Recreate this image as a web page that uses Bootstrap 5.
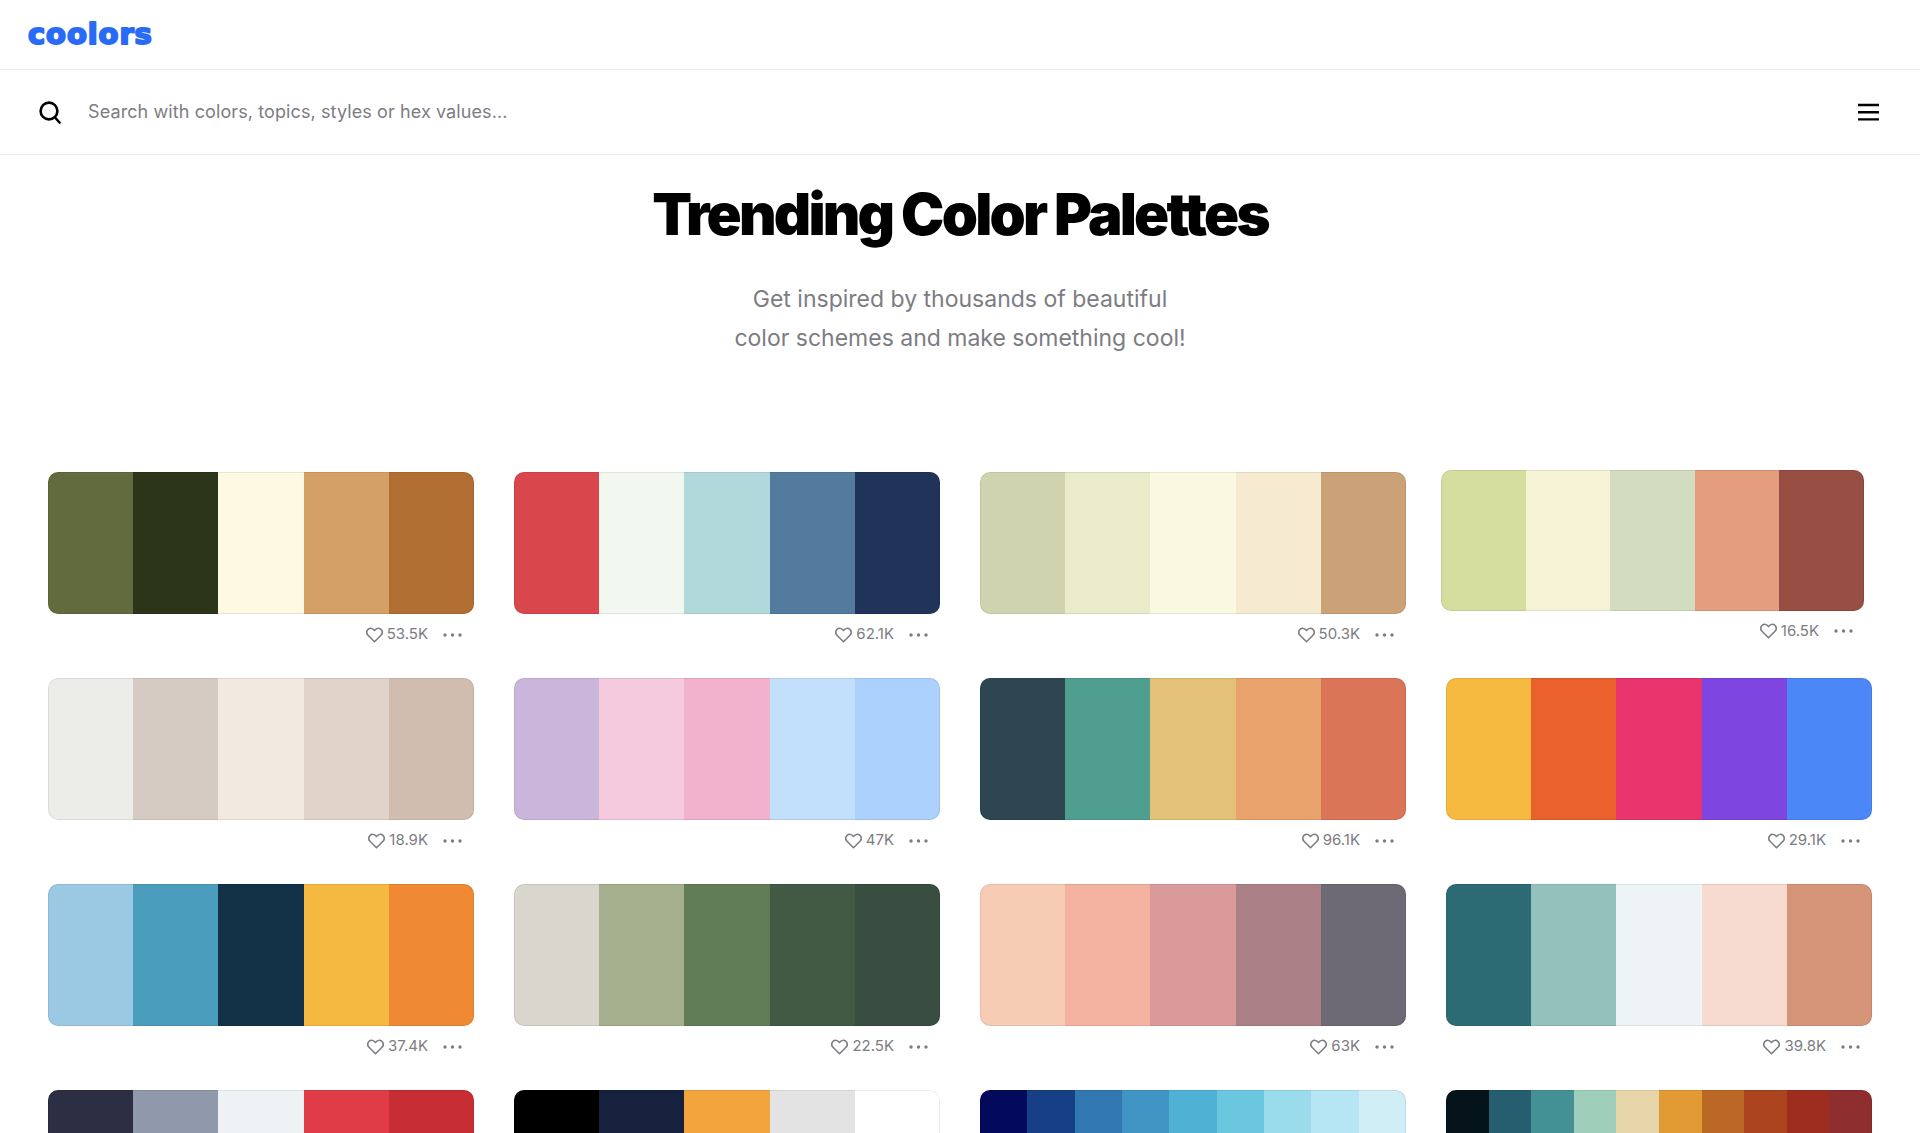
<!DOCTYPE html>
<html lang="en">
<head>
  <meta charset="UTF-8" />
  <meta name="viewport" content="width=device-width, initial-scale=1.0"/>
  <title>Trending Color Palettes</title>
  <link href="https://cdn.jsdelivr.net/npm/bootstrap@5.3.3/dist/css/bootstrap.min.css" rel="stylesheet" />
  <style>
    html, body { height: 100vh; overflow: hidden; }
    body { font-family: Inter, "Liberation Sans", sans-serif; color: #000; background: #fff; }
    .topbar { height: 70px; padding-left: 27px; border-bottom: 1px solid #e9e9ea; }
    .logo-word { font-family: "DejaVu Sans", sans-serif; font-weight: 700; font-size: 29px; letter-spacing: .9px; fill: #2a6bf5; stroke: #2a6bf5; stroke-width: 2px; stroke-linejoin: round; }
    .searchbar { height: 85px; padding: 0 41px 0 39px; border-bottom: 1px solid #e9e9ea; }
    .search-input { border: 0; outline: 0; padding: 0 0 2px; margin-left: 27px; font-size: 18px; letter-spacing: .1px; color: #7d7c83; background: transparent; }
    .search-input::placeholder { color: #7d7c83; opacity: 1; }
    .page-head { padding-top: 24px; height: 317px; }
    .page-title { font-weight: 900; font-size: 58px; line-height: 70px; letter-spacing: -2.8px; margin: 0 0 31px; }
    .page-sub { font-size: 23px; line-height: 39px; color: #7d7c83; margin: 0; }
    .palettes { padding: 0 48px; }
    .palettes .row { --bs-gutter-x: 40px; --bs-gutter-y: 0; }
    .palette-box { height: 206px; }
    .swatches { height: 142px; border-radius: 10px; overflow: hidden; position: relative; }
    .swatches::after { content: ""; position: absolute; inset: 0; border-radius: 10px; box-shadow: inset 0 0 0 1px rgba(0,0,0,.08); }
    .swatch { flex: 1 1 0; }
    .palette-meta { height: 41px; padding-right: 12px; font-size: 15px; color: #7d7c83; }
    .dots { margin-left: 15px; }
    /* this card is caught mid animation in the picture */
    .palette-moving { margin: -2px 8px 0 -5px; }
    .palette-moving .swatches { height: 141px; }
    .palette-moving .palette-meta { padding-right: 11px; height: 40px; }
  </style>
</head>
<body>

  <div class="topbar d-flex align-items-center">
    <svg width="130" height="40" viewBox="0 0 130 40" role="img" aria-label="coolors">
      <text class="logo-word" x="1" y="29">coolors</text>
    </svg>
  </div>

  <div class="searchbar d-flex align-items-center justify-content-between">
    <div class="d-flex align-items-center flex-grow-1">
      <svg width="22" height="23" viewBox="0 0 22 23" fill="none" stroke="#000" stroke-width="2.6" stroke-linecap="round">
        <circle cx="10" cy="10" r="8.4"/>
        <path d="M16 16.5 L20.5 21.5"/>
      </svg>
      <input class="search-input flex-grow-1" type="text" placeholder="Search with colors, topics, styles or hex values...">
    </div>
    <svg width="21" height="18" viewBox="0 0 21 18" stroke="#000" stroke-width="2.4">
      <path d="M0 2H21M0 9.2H21M0 16.4H21"/>
    </svg>
  </div>

  <div class="page-head text-center">
    <h1 class="page-title">Trending Color Palettes</h1>
    <p class="page-sub">Get inspired by thousands of beautiful<br>color schemes and make something cool!</p>
  </div>

  <div class="palettes">
    <div class="row row-cols-4" id="palette-list"></div>
  </div>

  <script>
    const palettes = [
      { c: ['#616b3d','#2c3519','#fdf9e2','#d5a066','#b06e33'], likes: '53.5K' },
      { c: ['#d9474d','#f2f8ef','#b1d9db','#527b9d','#20345a'], likes: '62.1K' },
      { c: ['#cfd4af','#e9ebca','#fbf8e2','#f6ebd0','#cba277'], likes: '50.3K' },
      { c: ['#d6de9f','#f5f2d6','#d1dcc0','#e49d7d','#974e43'], likes: '16.5K', moving: true },
      { c: ['#ecece8','#d5cbc2','#f2e9e0','#e0d3ca','#d1bdaf'], likes: '18.9K' },
      { c: ['#cab6da','#f5c9de','#f2b1cd','#c2dffb','#abd1fc'], likes: '47K' },
      { c: ['#2d4651','#4f9e8f','#e3c277','#e9a26c','#da7558'], likes: '96.1K' },
      { c: ['#f6ba40','#ea612d','#ea346d','#7e45e1','#4b87f6'], likes: '29.1K' },
      { c: ['#9bc8e3','#4a9dbc','#123046','#f5b840','#ef8933'], likes: '37.4K' },
      { c: ['#d9d7cd','#a6af8d','#607d58','#425a43','#394d41'], likes: '22.5K' },
      { c: ['#f7ccb5','#f4b2a0','#db9a9a','#ac8087','#6d6975'], likes: '63K' },
      { c: ['#2c6b74','#93c2bc','#eef3f6','#f8dbd0','#d69479'], likes: '39.8K' },
      { c: ['#2c2e44','#8f99ab','#eff2f4','#df3c47','#c72e34'] },
      { c: ['#000000','#15213d','#f2a53d','#e3e3e3','#ffffff'] },
      { c: ['#030a5c','#163f86','#3177b2','#4195c4','#4fb2d5','#6bc6e0','#9bdcec','#b6e5f3','#cfeef6'] },
      { c: ['#04141a','#265e70','#439194','#9fcfbb','#e5d5a9','#e29a35','#bb6827','#ac441f','#9d2d1e','#8e2e2f'] }
    ];

    const heart = `<svg class="me-1" width="17" height="16" viewBox="0 0 17 16" fill="none" stroke="#7d7c83" stroke-width="1.6" stroke-linejoin="round"><path d="M8.5 14.7 L2 8.3 C0.2 6.5 0.4 3.7 2.1 2.3 C3.9 0.9 6.6 1.1 8.5 3.5 C10.4 1.1 13.1 0.9 14.9 2.3 C16.6 3.7 16.8 6.5 15 8.3 Z"/></svg>`;
    const dots = `<svg class="dots" width="19" height="4" viewBox="0 0 19 4" fill="#7d7c83"><circle cx="2" cy="2" r="1.7"/><circle cx="9.5" cy="2" r="1.7"/><circle cx="17" cy="2" r="1.7"/></svg>`;

    document.getElementById('palette-list').innerHTML = palettes.map(p => `
      <div class="col">
        <div class="palette-box${p.moving ? ' palette-moving' : ''}">
          <div class="swatches d-flex">
            ${p.c.map(col => `<div class="swatch" style="background:${col}"></div>`).join('')}
          </div>
          ${p.likes ? `<div class="palette-meta d-flex align-items-center justify-content-end">${heart}<span>${p.likes}</span>${dots}</div>` : ''}
        </div>
      </div>`).join('');
  </script>

  <script src="https://cdn.jsdelivr.net/npm/bootstrap@5.3.3/dist/js/bootstrap.bundle.min.js"></script>
</body>
</html>
